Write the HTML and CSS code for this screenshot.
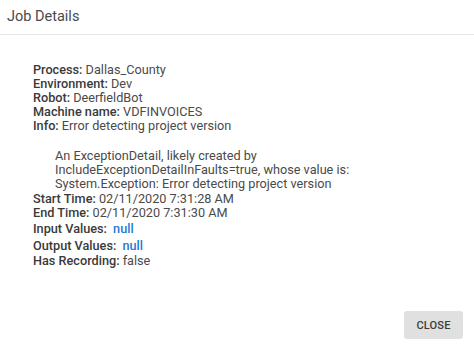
FILE: index.html
```html
<!DOCTYPE html>
<html>
<head>
<meta charset="utf-8">
<link rel="stylesheet" href="styles.css">
</head>
<body>
<div class="dialog">
  <div class="dialog-header">Job Details</div>
  <div class="dialog-body">
    <div class="row"><b>Process:</b> Dallas_County</div>
    <div class="row"><b>Environment:</b> Dev</div>
    <div class="row"><b>Robot:</b> DeerfieldBot</div>
    <div class="row"><b>Machine name:</b> VDFINVOICES</div>
    <div class="row"><b>Info:</b> Error detecting project version</div>
    <div class="exception">
      <div class="row">An ExceptionDetail, likely created by</div>
      <div class="row">IncludeExceptionDetailInFaults=true, whose value is:</div>
      <div class="row">System.Exception: Error detecting project version</div>
    </div>
    <div class="row"><b>Start Time:</b> 02/11/2020 7:31:28 AM</div>
    <div class="row"><b>End Time:</b> 02/11/2020 7:31:30 AM</div>
    <div class="row tall"><b>Input Values:</b> <span class="null">null</span></div>
    <div class="row tall"><b>Output Values:</b> <span class="null">null</span></div>
    <div class="row"><b>Has Recording:</b> false</div>
  </div>
  <div class="dialog-footer">
    <button class="btn-close">CLOSE</button>
  </div>
</div>
</body>
</html>
```
FILE: styles.css
```css
html, body {
  margin: 0;
  padding: 0;
  background: #ffffff;
}
body {
  font-family: Roboto, "Liberation Sans", sans-serif;
  color: #4a4a4a;
}
.dialog {
  height: 354px;
  display: flex;
  flex-direction: column;
}
.dialog-header {
  height: 35px;
  box-sizing: border-box;
  padding: 8px 0 0 7px;
  font-size: 14.5px;
  line-height: 18px;
  color: #4a4a4a;
  border-bottom: 1px solid #e6e6e6;
}
.dialog-body {
  flex: 1;
  padding: 28px 0 0 33px;
  font-size: 12.7px;
}
.row {
  height: 14px;
  line-height: 14px;
  white-space: nowrap;
}
.row b {
  font-weight: 500;
  color: #3a3a3a;
}
.row.tall {
  height: 17px;
  line-height: 17px;
}
.exception {
  padding: 16px 0 1px 22px;
}
.null {
  color: #1f7ad0;
  font-weight: 500;
  margin-left: 3px;
}
.dialog-footer {
  display: flex;
  justify-content: flex-end;
  padding: 0 11px 15px 0;
}
.btn-close {
  width: 59px;
  height: 28px;
  border: none;
  border-radius: 3px;
  background: #e0e0e0;
  color: #3c3c3c;
  font-family: Roboto, "Liberation Sans", sans-serif;
  font-size: 11px;
  font-weight: 500;
  letter-spacing: 0.2px;
  padding: 0;
}
```
